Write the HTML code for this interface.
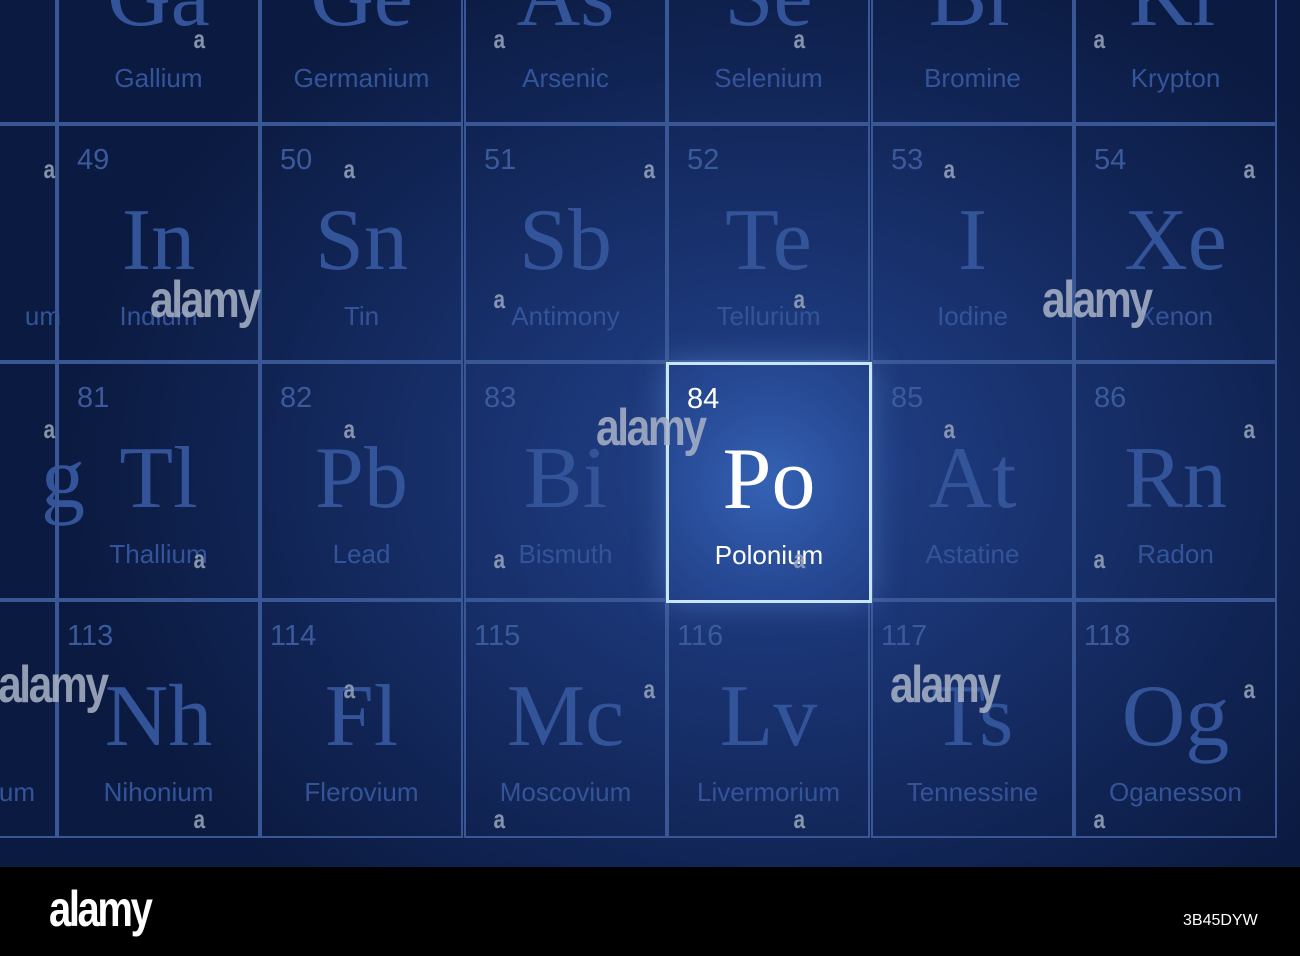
<!DOCTYPE html>
<html><head><meta charset="utf-8"><style>
body{margin:0;width:1300px;height:956px;overflow:hidden;background:#000;position:relative;font-family:"Liberation Sans","DejaVu Sans",sans-serif}
#t{position:absolute;left:0;top:0;width:1300px;height:867px;overflow:hidden;background:radial-gradient(ellipse 700px 560px at 768px 470px,#24458c 0%,#1a3473 35%,#112556 70%,#0b1a40 100%)}
.c{position:absolute;width:203px;height:238px;border:2px solid #3a5795;box-sizing:border-box}
.n{position:absolute;left:18px;top:18px;font-size:29px;color:#3b5a9c}
.s{position:absolute;left:0;width:100%;top:64px;text-align:center;font-family:"Liberation Serif",serif;font-size:88px;color:#34549a}
.m{position:absolute;left:0;width:100%;top:175px;text-align:center;font-size:26px;color:#34549a}
.w{position:absolute;font-family:"Liberation Sans",sans-serif;font-weight:bold;font-size:52px;color:#aab4c8;letter-spacing:-3px;opacity:.85;transform:scaleX(.82);transform-origin:0 0}
.a{position:absolute;font-family:"Liberation Sans",sans-serif;font-weight:bold;font-size:26px;color:#9aa6bc;opacity:.85;transform:scaleX(.8)}
#po{border:3px solid #c8e6f5;background:radial-gradient(circle at 50% 50%,#3562b4 0%,#2a4f9c 50%,#213f86 100%);box-shadow:0 0 30px rgba(120,170,255,.35)}
#po .n,#po .s,#po .m{color:#fff}
</style></head><body>
<div id="t">
<div class="c" style="left:57px;top:-114px"><div class="s" style="top:58px">Ga</div><div class="m">Gallium</div></div>
<div class="c" style="left:260px;top:-114px"><div class="s" style="top:58px">Ge</div><div class="m">Germanium</div></div>
<div class="c" style="left:464px;top:-114px"><div class="s" style="top:58px">As</div><div class="m">Arsenic</div></div>
<div class="c" style="left:667px;top:-114px"><div class="s" style="top:58px">Se</div><div class="m">Selenium</div></div>
<div class="c" style="left:871px;top:-114px"><div class="s" style="top:58px">Br</div><div class="m">Bromine</div></div>
<div class="c" style="left:1074px;top:-114px"><div class="s" style="top:58px">Kr</div><div class="m">Krypton</div></div>
<div class="c" style="left:-146px;top:-114px"></div>
<div class="c" style="left:-146px;top:124px"><div class="m" style="left:auto;right:-6px;width:auto">um</div></div>
<div class="c" style="left:57px;top:124px"><div class="n">49</div><div class="s">In</div><div class="m">Indium</div></div>
<div class="c" style="left:260px;top:124px"><div class="n">50</div><div class="s">Sn</div><div class="m">Tin</div></div>
<div class="c" style="left:464px;top:124px"><div class="n">51</div><div class="s">Sb</div><div class="m">Antimony</div></div>
<div class="c" style="left:667px;top:124px"><div class="n">52</div><div class="s">Te</div><div class="m">Tellurium</div></div>
<div class="c" style="left:871px;top:124px"><div class="n">53</div><div class="s">I</div><div class="m">Iodine</div></div>
<div class="c" style="left:1074px;top:124px"><div class="n">54</div><div class="s">Xe</div><div class="m">Xenon</div></div>
<div class="c" style="left:-146px;top:362px"><div class="s" style="left:auto;right:-30px;width:auto">g</div></div>
<div class="c" style="left:57px;top:362px"><div class="n">81</div><div class="s">Tl</div><div class="m">Thallium</div></div>
<div class="c" style="left:260px;top:362px"><div class="n">82</div><div class="s">Pb</div><div class="m">Lead</div></div>
<div class="c" style="left:464px;top:362px"><div class="n">83</div><div class="s">Bi</div><div class="m">Bismuth</div></div>
<div class="c" style="left:871px;top:362px"><div class="n">85</div><div class="s">At</div><div class="m">Astatine</div></div>
<div class="c" style="left:1074px;top:362px"><div class="n">86</div><div class="s">Rn</div><div class="m">Radon</div></div>
<div class="c" style="left:-146px;top:600px"><div class="m" style="left:auto;right:20px;width:auto">um</div></div>
<div class="c" style="left:57px;top:600px"><div class="n" style="left:8px">113</div><div class="s">Nh</div><div class="m">Nihonium</div></div>
<div class="c" style="left:260px;top:600px"><div class="n" style="left:8px">114</div><div class="s">Fl</div><div class="m">Flerovium</div></div>
<div class="c" style="left:464px;top:600px"><div class="n" style="left:8px">115</div><div class="s">Mc</div><div class="m">Moscovium</div></div>
<div class="c" style="left:667px;top:600px"><div class="n" style="left:8px">116</div><div class="s">Lv</div><div class="m">Livermorium</div></div>
<div class="c" style="left:871px;top:600px"><div class="n" style="left:8px">117</div><div class="s">Ts</div><div class="m">Tennessine</div></div>
<div class="c" style="left:1074px;top:600px"><div class="n" style="left:8px">118</div><div class="s">Og</div><div class="m">Oganesson</div></div>
<div class="c" id="po" style="left:666px;top:362px;width:206px;height:241px"><div class="n">84</div><div class="s">Po</div><div class="m">Polonium</div></div>
<div class="w" style="left:150px;top:270px">alamy</div>
<div class="w" style="left:1042px;top:270px">alamy</div>
<div class="w" style="left:596px;top:398px">alamy</div>
<div class="w" style="left:-2px;top:655px">alamy</div>
<div class="w" style="left:890px;top:655px">alamy</div>
<div class="a" style="left:192px;top:24px">a</div><div class="a" style="left:492px;top:24px">a</div><div class="a" style="left:792px;top:24px">a</div><div class="a" style="left:1092px;top:24px">a</div>
<div class="a" style="left:42px;top:154px">a</div><div class="a" style="left:342px;top:154px">a</div><div class="a" style="left:642px;top:154px">a</div><div class="a" style="left:942px;top:154px">a</div><div class="a" style="left:1242px;top:154px">a</div>
<div class="a" style="left:492px;top:284px">a</div><div class="a" style="left:792px;top:284px">a</div>
<div class="a" style="left:42px;top:414px">a</div><div class="a" style="left:342px;top:414px">a</div><div class="a" style="left:942px;top:414px">a</div><div class="a" style="left:1242px;top:414px">a</div>
<div class="a" style="left:192px;top:544px">a</div><div class="a" style="left:492px;top:544px">a</div><div class="a" style="left:792px;top:544px">a</div><div class="a" style="left:1092px;top:544px">a</div>
<div class="a" style="left:342px;top:674px">a</div><div class="a" style="left:642px;top:674px">a</div><div class="a" style="left:1242px;top:674px">a</div>
<div class="a" style="left:192px;top:804px">a</div><div class="a" style="left:492px;top:804px">a</div><div class="a" style="left:792px;top:804px">a</div><div class="a" style="left:1092px;top:804px">a</div>
</div>
<div style="position:absolute;left:49px;top:880px;font-family:'Liberation Sans',sans-serif;font-weight:bold;font-size:50px;color:#fff;letter-spacing:-3px;transform:scaleX(.8);transform-origin:0 0">alamy</div>
<div style="position:absolute;left:1183px;top:912px;font-size:16px;color:#fff">3B45DYW</div>
</body></html>
